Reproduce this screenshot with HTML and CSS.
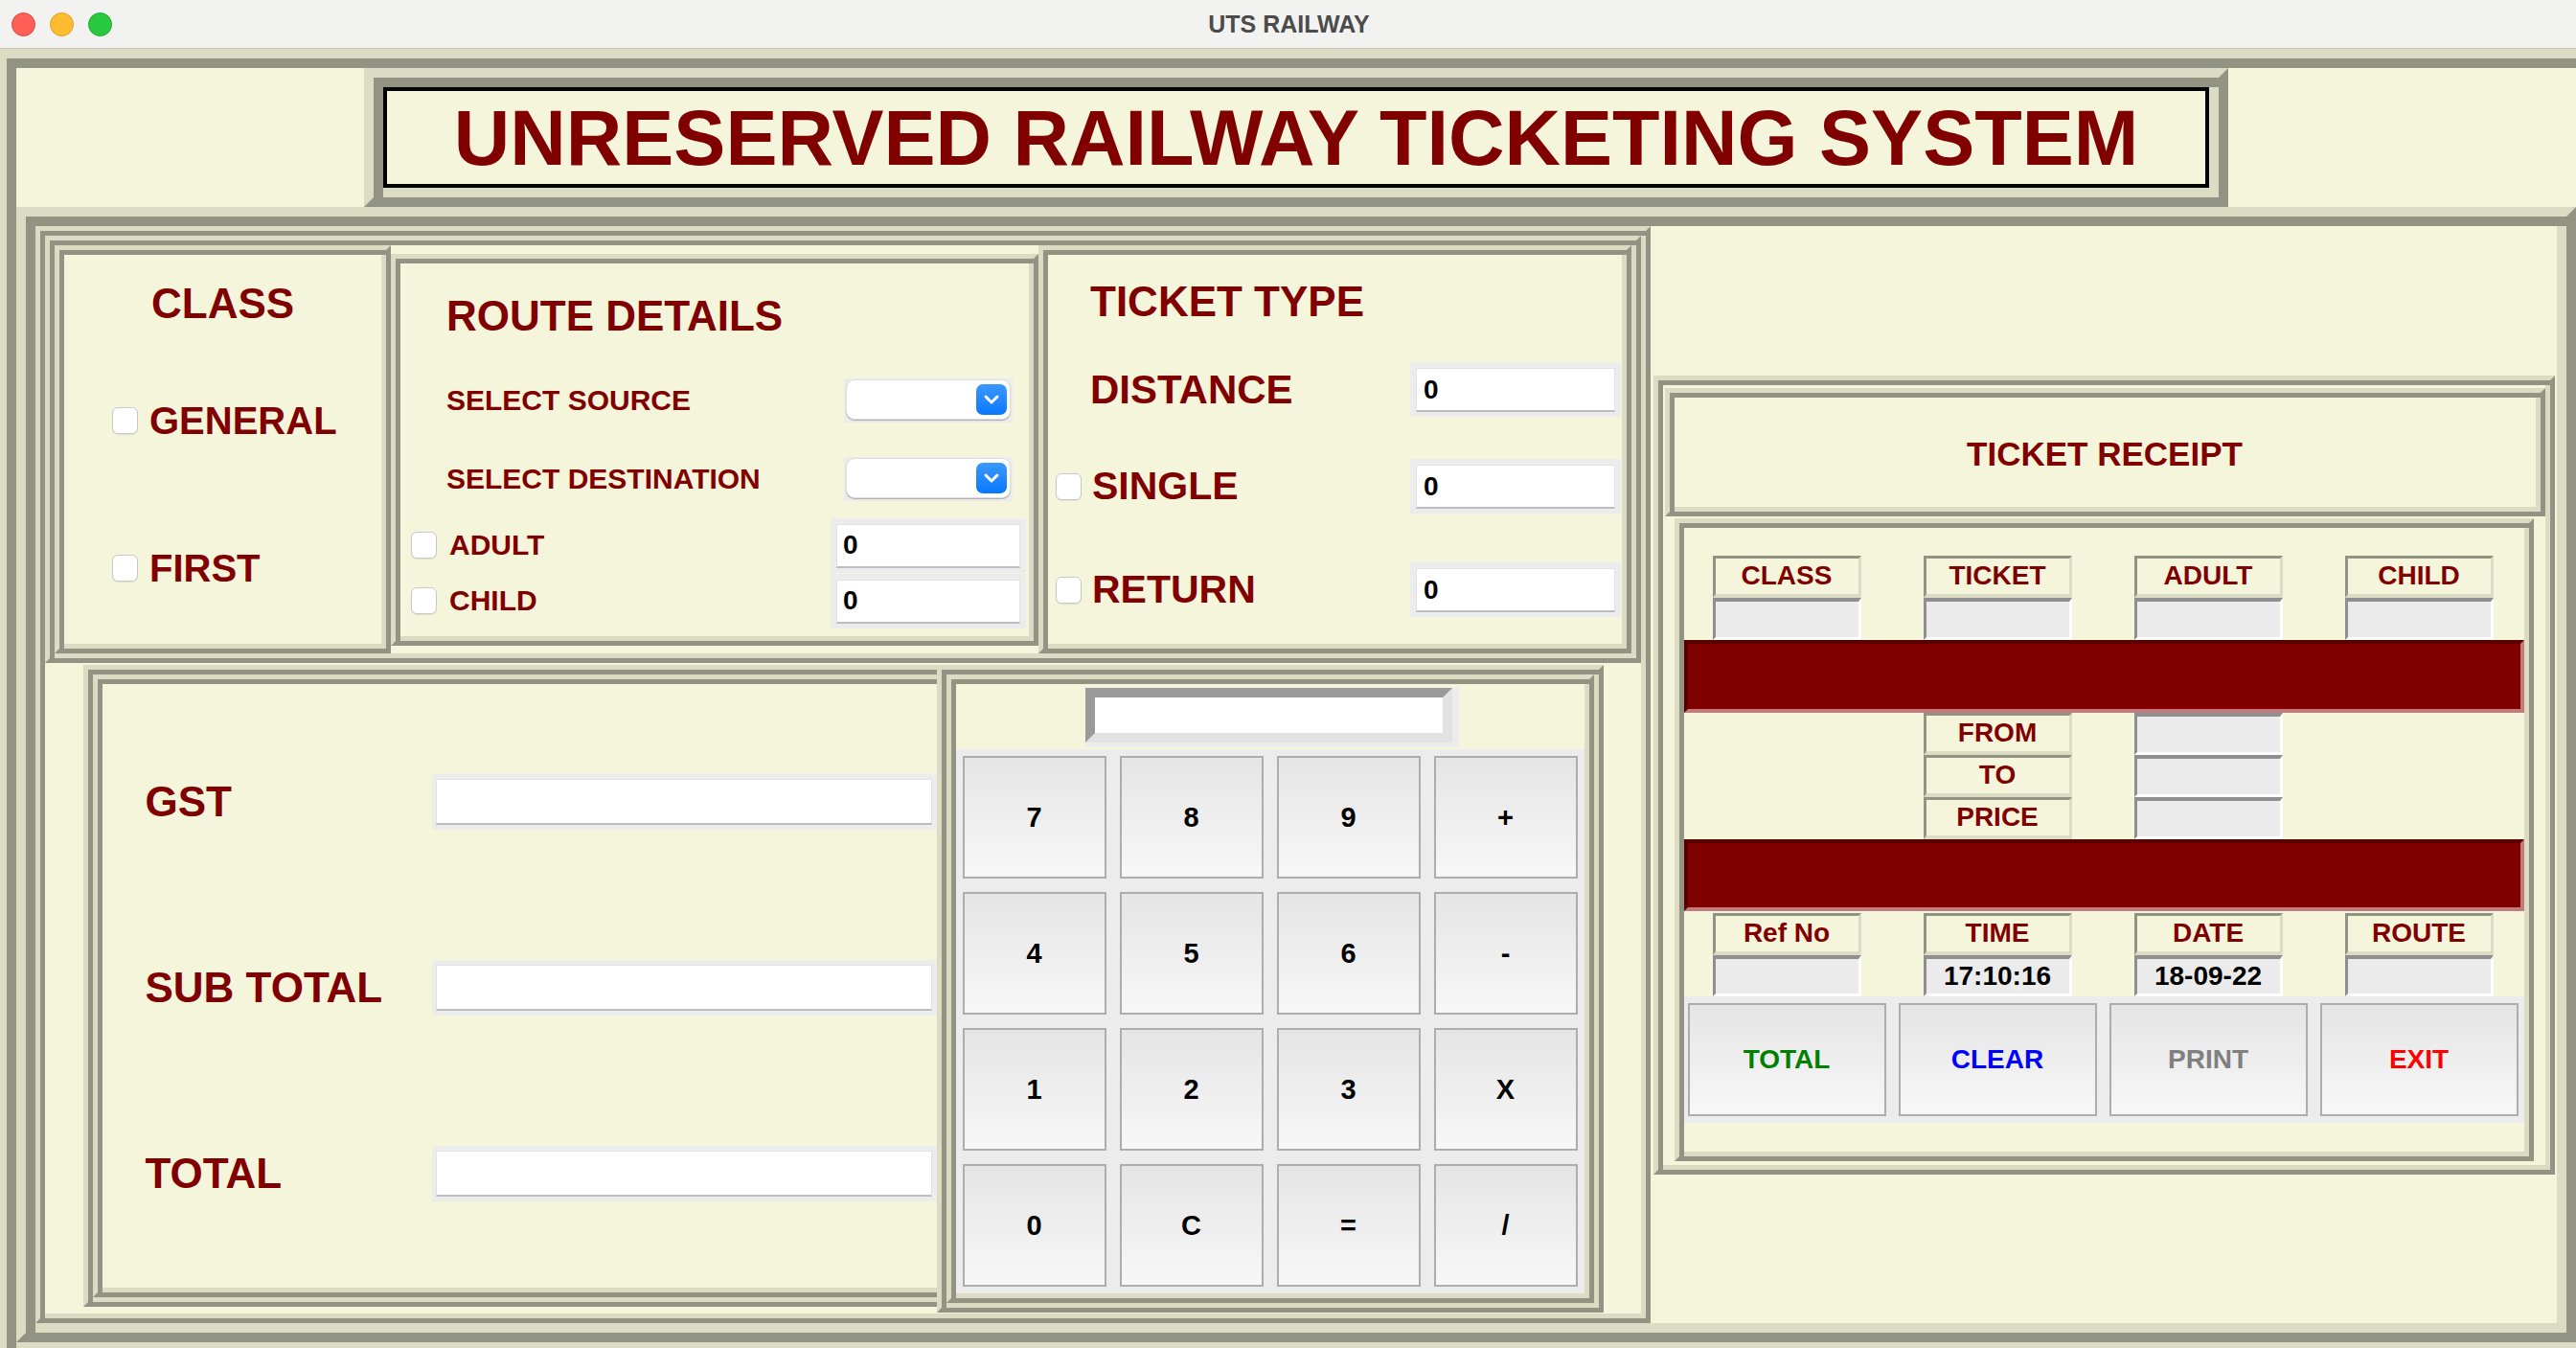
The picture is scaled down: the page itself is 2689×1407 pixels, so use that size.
FILE: index.html
```html
<!DOCTYPE html>
<html>
<head>
<meta charset="utf-8">
<title>UTS RAILWAY</title>
<link rel="stylesheet" href="styles.css">
</head>
<body>
<div class="titlebar">
  <div class="lights"><span class="light red"></span><span class="light yellow"></span><span class="light green"></span></div>
  <div class="wtitle">UTS RAILWAY</div>
  <div></div>
</div>
<div class="root">
  <div class="title-row">
    <div class="r10 title-frame"><div class="title-label">UNRESERVED RAILWAY TICKETING SYSTEM</div></div>
  </div>
  <div class="r10 body-frame">
    <div class="r5 frame-a">
      <div class="r5 frame-b">
        <div class="r5 cls">
          <div class="cls-title lbl">CLASS</div>
          <div class="opt opt-general"><span class="chk"></span><span class="lbl opt-text">GENERAL</span></div>
          <div class="opt opt-first"><span class="chk"></span><span class="lbl opt-text">FIRST</span></div>
        </div>
        <div class="r5 route">
          <div class="route-title lbl">ROUTE DETAILS</div>
          <div class="rrow rrow-src">
            <span class="lbl small">SELECT SOURCE</span>
            <div class="combo"><div class="combo-in"><span class="combo-btn"><svg viewBox="0 0 32 32" width="32" height="32"><polyline points="10,13 16,19 22,13" fill="none" stroke="#fff" stroke-width="3" stroke-linecap="round" stroke-linejoin="round"/></svg></span></div></div>
          </div>
          <div class="rrow rrow-dst">
            <span class="lbl small">SELECT DESTINATION</span>
            <div class="combo"><div class="combo-in"><span class="combo-btn"><svg viewBox="0 0 32 32" width="32" height="32"><polyline points="10,13 16,19 22,13" fill="none" stroke="#fff" stroke-width="3" stroke-linecap="round" stroke-linejoin="round"/></svg></span></div></div>
          </div>
          <div class="prow prow-adult">
            <span class="chk"></span><span class="lbl small plabel">ADULT</span>
            <div class="entry pentry"><div class="entry-in">0</div></div>
          </div>
          <div class="prow prow-child">
            <span class="chk"></span><span class="lbl small plabel">CHILD</span>
            <div class="entry pentry"><div class="entry-in">0</div></div>
          </div>
        </div>
        <div class="r5 ttype">
          <div class="tt-title lbl">TICKET TYPE</div>
          <div class="trow trow-dist">
            <span class="lbl tlabel tlabel-dist">DISTANCE</span>
            <div class="entry tentry"><div class="entry-in">0</div></div>
          </div>
          <div class="trow trow-single">
            <span class="chk"></span><span class="lbl tlabel">SINGLE</span>
            <div class="entry tentry"><div class="entry-in">0</div></div>
          </div>
          <div class="trow trow-return">
            <span class="chk"></span><span class="lbl tlabel">RETURN</span>
            <div class="entry tentry"><div class="entry-in">0</div></div>
          </div>
        </div>
      </div>
      <div class="bottom-row">
        <div class="r5 nor gst">
          <div class="r5 nor gst-in">
            <div class="grow grow-1"><span class="lbl glabel">GST</span><div class="entry gentry"><div class="entry-in"></div></div></div>
            <div class="grow grow-2"><span class="lbl glabel">SUB TOTAL</span><div class="entry gentry"><div class="entry-in"></div></div></div>
            <div class="grow grow-3"><span class="lbl glabel">TOTAL</span><div class="entry gentry"><div class="entry-in"></div></div></div>
          </div>
        </div>
        <div class="r5 keypad">
          <div class="r5 keypad-in">
            <div class="calc-display"><div class="calc-display-in"></div></div>
            <div class="keys">
              <button class="key">7</button><button class="key">8</button><button class="key">9</button><button class="key">+</button>
              <button class="key">4</button><button class="key">5</button><button class="key">6</button><button class="key">-</button>
              <button class="key">1</button><button class="key">2</button><button class="key">3</button><button class="key">X</button>
              <button class="key">0</button><button class="key">C</button><button class="key">=</button><button class="key">/</button>
            </div>
          </div>
        </div>
      </div>
    </div>
    <div class="right-col">
      <div class="r5 receipt">
        <div class="r5 receipt-head"><span class="lbl rh-text">TICKET RECEIPT</span></div>
        <div class="r5 receipt-body">
          <div class="rgrid rgrid-top">
            <div class="tag">CLASS</div><div class="tag">TICKET</div><div class="tag">ADULT</div><div class="tag">CHILD</div>
            <div class="val"></div><div class="val"></div><div class="val"></div><div class="val"></div>
          </div>
          <div class="redbar redbar-1"></div>
          <div class="rgrid rgrid-mid">
            <div class="tag c2">FROM</div><div class="val c3"></div>
            <div class="tag c2">TO</div><div class="val c3"></div>
            <div class="tag c2">PRICE</div><div class="val c3"></div>
          </div>
          <div class="redbar redbar-2"></div>
          <div class="rgrid rgrid-bot">
            <div class="tag">Ref No</div><div class="tag">TIME</div><div class="tag">DATE</div><div class="tag">ROUTE</div>
            <div class="val"></div><div class="val">17:10:16</div><div class="val">18-09-22</div><div class="val"></div>
          </div>
          <div class="rbtns">
            <button class="rbtn green">TOTAL</button>
            <button class="rbtn blue">CLEAR</button>
            <button class="rbtn gray">PRINT</button>
            <button class="rbtn red">EXIT</button>
          </div>
        </div>
      </div>
    </div>
  </div>
</div>
</body>
</html>
```

FILE: styles.css
```css
:root {
  --bg: #f5f5dc;
  --lt: #dcdcc4;
  --dk: #939383;
  --mar: #800000;
}
html, body {
  margin: 0;
  padding: 0;
  overflow: hidden;
}
body {
  width: 2689px;
  height: 1407px;
  background: var(--bg);
  font-family: "Liberation Sans", Arial, sans-serif;
  font-weight: bold;
}

/* window title bar */
.titlebar {
  box-sizing: border-box;
  height: 51px;
  background: #f2f3f1;
  border-bottom: 1px solid #c9c9bb;
  display: grid;
  grid-template-columns: 1fr auto 1fr;
  align-items: center;
}
.lights {
  display: flex;
  gap: 15px;
  padding-left: 12px;
  padding-top: 1px;
}
.light {
  width: 25px;
  height: 25px;
  border-radius: 50%;
  box-sizing: border-box;
}
.red { background: #fe5f57; border: 1px solid #e2463f; }
.yellow { background: #febc2e; border: 1px solid #dea123; }
.green { background: #28c840; border: 1px solid #1aab29; }
.wtitle {
  font-size: 25px;
  color: #4b4b4b;
  padding-left: 2px;
}

/* Tk-like ridge frames */
.r5 {
  box-sizing: border-box;
  border: 5px solid;
  border-color: var(--lt) var(--dk) var(--dk) var(--lt);
  box-shadow: inset 5px 5px 0 var(--dk), inset -5px -5px 0 var(--lt);
  padding: 5px;
}
.r10 {
  box-sizing: border-box;
  border: 10px solid;
  border-color: var(--lt) var(--dk) var(--dk) var(--lt);
  box-shadow: inset 10px 10px 0 var(--dk), inset -10px -10px 0 var(--lt);
  padding: 10px;
}
.nor {
  border-right-width: 0;
  padding-right: 0;
  box-shadow: inset 5px 5px 0 var(--dk), inset 0 -5px 0 var(--lt);
}

.root {
  box-sizing: content-box;
  width: 2672px;
  height: 1330px;
  border: 10px solid;
  border-left-width: 7px;
  border-color: var(--lt) var(--dk) var(--dk) var(--lt);
  padding: 10px;
  box-shadow: inset 10px 10px 0 var(--dk), inset -10px -10px 0 var(--lt);
  display: flex;
  flex-direction: column;
}

.title-row {
  height: 145px;
  display: flex;
  justify-content: center;
  flex-shrink: 0;
}
.title-frame {
  width: 1946px;
  height: 145px;
  display: flex;
}
.title-label {
  flex: 1;
  border: 4px solid #000;
  display: flex;
  align-items: center;
  justify-content: center;
  color: var(--mar);
  font-size: 81px;
  padding-top: 2px;
}

.body-frame {
  width: 2672px;
  height: 1185px;
  display: flex;
  flex-shrink: 0;
}
.frame-a {
  width: 1686px;
  height: 100%;
  display: flex;
  flex-direction: column;
  flex-shrink: 0;
}
.frame-b {
  height: 446px;
  display: flex;
  align-items: center;
  flex-shrink: 0;
}

.lbl { color: var(--mar); white-space: nowrap; }

/* CLASS frame */
.cls {
  width: 351px;
  align-self: stretch;
  display: flex;
  flex-direction: column;
}
.cls-title {
  margin-top: 26px;
  height: 50px;
  line-height: 50px;
  padding-left: 91px;
  font-size: 44px;
}
.opt {
  height: 50px;
  display: flex;
  align-items: center;
  padding-left: 50px;
}
.opt-general { margin-top: 72px; }
.opt-first { margin-top: 104px; }
.opt-text {
  margin-left: 12px;
  font-size: 40px;
}
.chk {
  display: inline-block;
  width: 27px;
  height: 28px;
  box-sizing: border-box;
  background: #fff;
  border: 1px solid #c9c9c9;
  border-radius: 6px;
  box-shadow: 0 1px 1px rgba(0,0,0,0.08);
  flex-shrink: 0;
}

/* ROUTE frame */
.route {
  width: 676px;
  height: 409px;
  display: flex;
  flex-direction: column;
}
.route-title {
  margin-top: 30px;
  height: 50px;
  line-height: 50px;
  padding-left: 48px;
  font-size: 44px;
}
.small { font-size: 30px; }
.rrow {
  height: 46px;
  display: flex;
  align-items: center;
  padding-left: 48px;
}
.rrow .lbl { flex: 1; }
.rrow-src { margin-top: 40px; }
.rrow-dst { margin-top: 36px; }
.combo {
  width: 176px;
  height: 46px;
  box-sizing: border-box;
  background: #ececec;
  padding: 1px 2px 3px 2px;
  margin-right: 17px;
}
.combo-in {
  height: 100%;
  box-sizing: border-box;
  background: #fff;
  border: 1px solid #dedede;
  border-radius: 9px;
  box-shadow: 0 1px 1px rgba(0,0,0,0.28);
  display: flex;
  align-items: center;
  justify-content: flex-end;
  padding-right: 3px;
}
.combo-btn {
  width: 32px;
  height: 32px;
  border-radius: 7px;
  background: linear-gradient(#3b98fe, #0a78fe);
  display: flex;
}
.prow {
  height: 57px;
  display: flex;
  align-items: center;
  padding-left: 11px;
}
.prow-adult { margin-top: 18px; }
.prow-child { margin-top: 1px; }
.plabel { margin-left: 13px; flex: 1; }

.entry {
  box-sizing: border-box;
  background: #ececec;
  padding: 6px 6px 5px 6px;
}
.entry-in {
  height: 100%;
  box-sizing: border-box;
  background: #fff;
  border: 1px solid #e2e2e2;
  border-bottom: 2px solid #bdbdbd;
  color: #000;
  font-size: 28px;
  display: flex;
  align-items: center;
  padding-left: 6px;
}
.pentry {
  width: 204px;
  height: 57px;
  margin-right: 3px;
}

/* TICKET TYPE frame */
.ttype {
  width: 619px;
  align-self: stretch;
  display: flex;
  flex-direction: column;
}
.tt-title {
  margin-top: 24px;
  height: 50px;
  line-height: 50px;
  padding-left: 44px;
  font-size: 44px;
}
.trow {
  height: 57px;
  display: flex;
  align-items: center;
  padding-left: 8px;
}
.trow-dist { margin-top: 38px; }
.trow-single { margin-top: 44px; }
.trow-return { margin-top: 51px; }
.tlabel {
  font-size: 41px;
  margin-left: 11px;
  flex: 1;
}
.tlabel-dist { margin-left: 36px; font-size: 42px; }
.tentry {
  width: 220px;
  height: 57px;
  margin-right: 1px;
}
.tentry .entry-in { padding-left: 7px; }

/* bottom row */
.bottom-row {
  flex: 1;
  display: flex;
  justify-content: center;
  align-items: flex-start;
  padding-top: 2px;
}
.gst {
  width: 891px;
  height: 670px;
  flex-shrink: 0;
}
.gst-in {
  height: 100%;
  display: flex;
  flex-direction: column;
}
.grow {
  height: 58px;
  display: flex;
  align-items: center;
  padding-left: 45px;
}
.grow-1 { margin-top: 94px; }
.grow-2 { margin-top: 136px; }
.grow-3 { margin-top: 136px; }
.glabel { flex: 1; font-size: 44px; }
.gentry {
  width: 527px;
  height: 58px;
  padding: 5px 5px 5px 4px;
}

.keypad {
  width: 696px;
  height: 676px;
  flex-shrink: 0;
}
.keypad-in {
  height: 100%;
  display: flex;
  flex-direction: column;
  align-items: center;
}
.calc-display {
  margin-top: 4px;
  margin-bottom: 2px;
  width: 390px;
  height: 62px;
  box-sizing: border-box;
  background: #ececec;
  padding: 0 7px 5px 0;
  margin-left: 4px;
  flex-shrink: 0;
}
.calc-display-in {
  height: 100%;
  box-sizing: border-box;
  background: #fff;
  border: 10px solid;
  border-color: #9a9a9a #e2e2e2 #e2e2e2 #9a9a9a;
}
.keys {
  align-self: stretch;
  flex: 1;
  box-sizing: border-box;
  background: #ececec;
  padding: 7px;
  display: grid;
  grid-template-columns: repeat(4, 1fr);
  grid-template-rows: repeat(4, 1fr);
  gap: 14px;
}
.key, .rbtn {
  font-family: "Liberation Sans", Arial, sans-serif;
  font-weight: bold;
  border: 2px solid #adadad;
  background: linear-gradient(#e5e5e5, #f7f7f7);
  padding: 0;
  margin: 0;
  display: flex;
  align-items: center;
  justify-content: center;
}
.key {
  font-size: 29px;
  color: #000;
}

/* right column / receipt */
.right-col {
  flex: 1;
  display: flex;
  align-items: center;
  justify-content: center;
}
.receipt {
  width: 941px;
  height: 834px;
  display: flex;
  flex-direction: column;
  align-items: center;
  flex-shrink: 0;
}
.receipt-head {
  align-self: stretch;
  margin-left: 2px;
  height: 134px;
  margin-top: 3px;
  display: flex;
  align-items: center;
  justify-content: center;
  flex-shrink: 0;
}
.rh-text {
  font-size: 35px;
  padding-top: 4px;
}
.receipt-body {
  width: 897px;
  height: 671px;
  margin-top: 2px;
  display: flex;
  flex-direction: column;
  flex-shrink: 0;
}
.rgrid {
  display: grid;
  grid-template-columns: repeat(4, 155px);
  column-gap: 65px;
  padding-left: 30px;
}
.rgrid-top {
  margin-top: 29px;
  grid-template-rows: 44px 44px;
}
.rgrid-mid { grid-template-rows: 44px 44px 44px; }
.rgrid-bot {
  margin-top: 2px;
  grid-template-rows: 44px 43px;
}
.c2 { grid-column: 2; }
.c3 { grid-column: 3; }
.tag {
  box-sizing: border-box;
  background: var(--bg);
  border-top: 3px solid var(--dk);
  border-left: 3px solid var(--dk);
  border-right: 3px solid var(--lt);
  border-bottom: 4px solid var(--lt);
  color: var(--mar);
  font-size: 28px;
  display: flex;
  align-items: center;
  justify-content: center;
}
.val {
  box-sizing: border-box;
  background: #ebebeb;
  border-top: 4px solid #8f8f8f;
  border-left: 3px solid #8f8f8f;
  border-right: 3px solid #fff;
  border-bottom: 3px solid #fff;
  color: #000;
  font-size: 28px;
  display: flex;
  align-items: center;
  justify-content: center;
}
.redbar {
  box-sizing: border-box;
  background: #800000;
  border-top: 4px solid #560000;
  border-left: 4px solid #560000;
  border-right: 4px solid #c27c7c;
  border-bottom: 4px solid #c27c7c;
}
.redbar-1 { height: 76px; }
.redbar-2 { height: 75px; }
.rbtns {
  height: 132px;
  box-sizing: border-box;
  background: #ececec;
  padding: 7px 6px 7px 4px;
  display: grid;
  grid-template-columns: repeat(4, 207px);
  column-gap: 13px;
}
.rbtn { font-size: 28px; }
.rbtn.green { color: #008000; }
.rbtn.blue { color: #0000ff; }
.rbtn.gray { color: #808080; }
.rbtn.red { color: #ff0000; }
```
